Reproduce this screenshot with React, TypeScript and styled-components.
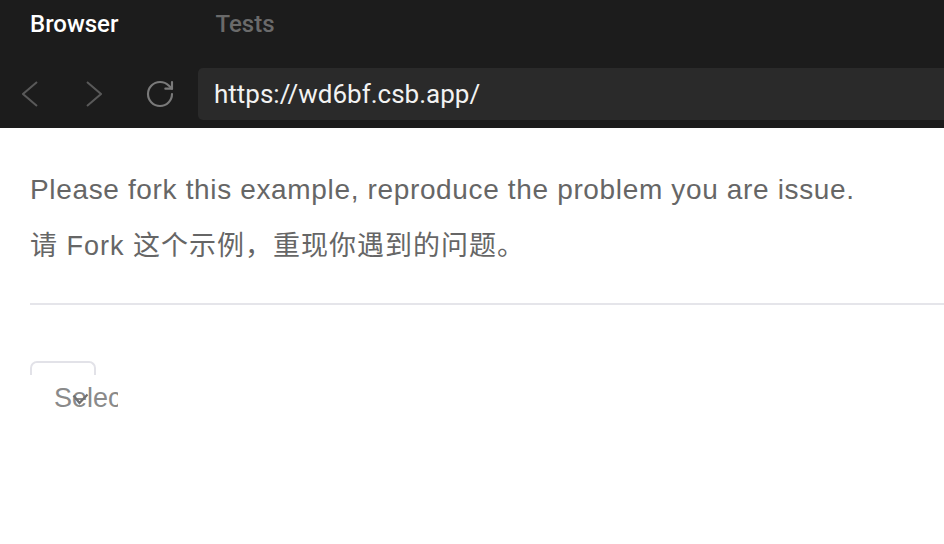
import styled, { createGlobalStyle } from "styled-components";
import { RotateCw } from "lucide-react";

const Global = createGlobalStyle`
  html, body {
    margin: 0;
    padding: 0;
    background: #fff;
  }
  body {
    font-family: "Liberation Sans", "Noto Sans CJK SC", sans-serif;
  }
`;

export default function App() {
  return (
    <>
      <Global />
      <Page>
        <TopBar>
          <Tabs>
            <Tab active>Browser</Tab>
            <Tab>Tests</Tab>
          </Tabs>
          <NavRow>
            <NavButton aria-label="Back">
              <svg width="16" height="26" viewBox="0 0 16 26" fill="none">
                <polyline
                  points="15,1 1,13 15,25"
                  stroke="currentColor"
                  strokeWidth="2"
                  strokeLinejoin="miter"
                />
              </svg>
            </NavButton>
            <NavButton aria-label="Forward">
              <svg width="16" height="26" viewBox="0 0 16 26" fill="none">
                <polyline
                  points="1,1 15,13 1,25"
                  stroke="currentColor"
                  strokeWidth="2"
                  strokeLinejoin="miter"
                />
              </svg>
            </NavButton>
            <NavButton aria-label="Reload" light>
              <RotateCw size={32} strokeWidth={1.6} />
            </NavButton>
            <UrlBar>https://wd6bf.csb.app/</UrlBar>
          </NavRow>
        </TopBar>

        <Content>
          <Text>Please fork this example, reproduce the problem you are issue.</Text>
          <Text cjk>请 Fork 这个示例，重现你遇到的问题。</Text>
          <Divider />
          <Select>
            <SelectBox />
            <SelectLabel>Select</SelectLabel>
            <Arrow viewBox="0 0 17 12" width="17" height="12" fill="none">
              <polyline
                points="1.5,2.5 7.5,10 15.5,1.5"
                stroke="currentColor"
                strokeWidth="2.2"
              />
            </Arrow>
          </Select>
        </Content>
      </Page>
    </>
  );
}

const Page = styled.div`
  width: 944px;
  min-height: 544px;
  background: #fff;
  overflow: hidden;
`;

const TopBar = styled.header`
  background: #1c1c1c;
  height: 128px;
  display: flex;
  flex-direction: column;
`;

const Tabs = styled.nav`
  height: 48px;
  display: flex;
  align-items: center;
  gap: 97px;
  padding-left: 30px;
`;

const Tab = styled.div<{ active?: boolean }>`
  font-family: Roboto, "Liberation Sans", sans-serif;
  font-weight: 500;
  font-size: 24px;
  color: ${(p) => (p.active ? "#ffffff" : "#6a6a6a")};
`;

const NavRow = styled.div`
  display: flex;
  align-items: center;
  padding: 20px 0 8px 22px;
  height: 52px;
`;

const NavButton = styled.button<{ light?: boolean }>`
  background: none;
  border: 0;
  padding: 0;
  display: flex;
  align-items: center;
  justify-content: center;
  width: 16px;
  margin-right: ${(p) => (p.light ? "22px" : "48px")};
  color: ${(p) => (p.light ? "#7a7a7a" : "#595959")};
  ${(p) => p.light && "width: 32px; margin-left: -6px;"}
`;

const UrlBar = styled.div`
  flex: 1;
  height: 52px;
  background: #2a2a2a;
  border-radius: 5px 0 0 5px;
  display: flex;
  align-items: center;
  padding-left: 16px;
  font-family: Roboto, "Liberation Sans", sans-serif;
  font-size: 26px;
  color: #f2f2f2;
`;

const Content = styled.main`
  padding: 44px 0 0 30px;
`;

const Text = styled.p<{ cjk?: boolean }>`
  margin: 0 0 20px;
  font-size: ${(p) => (p.cjk ? "27px" : "28px")};
  letter-spacing: ${(p) => (p.cjk ? "1px" : "0.65px")};
  line-height: 36px;
  color: #666;
`;

const Divider = styled.hr`
  border: 0;
  border-top: 2px solid #e5e5ea;
  margin: 39px 0 0;
`;

const Select = styled.div`
  position: relative;
  margin-top: 56px;
  width: 88px;
`;

const SelectBox = styled.div`
  width: 62px;
  height: 12px;
  border: 2px solid #e2e2e8;
  border-bottom: 0;
  border-radius: 7px 7px 0 0;
`;

const SelectLabel = styled.div`
  width: 64px;
  padding-left: 24px;
  margin-top: 8px;
  overflow: hidden;
  white-space: nowrap;
  font-size: 27px;
  line-height: 30px;
  color: #8a8a8a;
`;

const Arrow = styled.svg`
  position: absolute;
  left: 42px;
  top: 32px;
  color: #707070;
`;
